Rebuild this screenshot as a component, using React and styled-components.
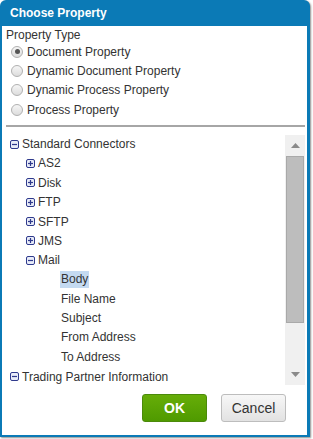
import styled, { createGlobalStyle } from "styled-components";

const GlobalStyle = createGlobalStyle`
    html, body {
        margin: 0;
        padding: 0;
        background: #ffffff;
    }
    body {
        font-family: "Liberation Sans", Arial, sans-serif;
        color: #333333;
    }
`;

const Page = styled.div`
    width: 313px;
    height: 439px;
    overflow: hidden;
    background: #ffffff;
`;

const Dialog = styled.div`
    width: 310px;
    height: 437px;
    box-sizing: border-box;
    display: flex;
    flex-direction: column;
    background: #0b7ab6;
    padding: 0 3px 2px 2px;
    border-top-left-radius: 6px;
    border-top-right-radius: 6px;
    box-shadow: 1px 1px 2px rgba(0, 0, 0, 0.45);
`;

const Header = styled.div`
    height: 26px;
    flex: none;
    display: flex;
    align-items: center;
    padding-left: 8px;
    padding-bottom: 1px;
    box-sizing: border-box;
    color: #ffffff;
    font-weight: bold;
    font-size: 12px;
`;

const Content = styled.div`
    flex: 1;
    background: #ffffff;
    display: flex;
    flex-direction: column;
    padding: 2px 2px 0 4px;
    font-size: 12px;
`;

const Label = styled.div`
    height: 14px;
    line-height: 14px;
`;

const RadioRow = styled.label`
    height: 19.33px;
    display: flex;
    align-items: center;
    gap: 4px;
    padding-left: 5px;
`;

const RadioDot = styled.span`
    width: 12px;
    height: 12px;
    box-sizing: border-box;
    border-radius: 50%;
    border: 1px solid #b0b0b0;
    background: linear-gradient(#f6f6f6, #dcdcdc);
    display: flex;
    align-items: center;
    justify-content: center;

    &::after {
        content: "";
        width: 5px;
        height: 5px;
        border-radius: 50%;
        background: ${p => (p.$checked ? "#555555" : "transparent")};
    }
`;

const Divider = styled.div`
    height: 2px;
    background: #a6a6a6;
    margin-top: 6px;
`;

const TreeArea = styled.div`
    margin-top: 6px;
    height: 252px;
    display: flex;
`;

const TreeList = styled.div`
    flex: 1;
    overflow: hidden;
    padding-top: 1px;
`;

const Row = styled.div`
    height: 19.4px;
    display: flex;
    align-items: center;
    gap: 3px;
    padding-left: ${p => p.$indent}px;
    white-space: nowrap;
`;

const Leaf = styled.span`
    padding: 1px 1px 2px 1px;
    background: ${p => (p.$selected ? "#c4daf1" : "transparent")};
`;

const Scrollbar = styled.div`
    width: 20px;
    margin-top: 2px;
    background: #f0f0f0;
    display: flex;
    flex-direction: column;
    align-items: center;
`;

const Arrow = styled.div`
    height: 21px;
    display: flex;
    align-items: center;
    justify-content: center;
`;

const Thumb = styled.div`
    width: 18px;
    height: 167px;
    box-sizing: border-box;
    background: #bdbdbd;
    border: 1px solid #a9a9a9;
`;

const Spacer = styled.div`
    flex: 1;
`;

const Footer = styled.div`
    display: flex;
    justify-content: flex-end;
    gap: 14px;
    margin-top: 9px;
    padding-right: 19px;
    padding-bottom: 13px;
`;

const Button = styled.button`
    width: 65px;
    height: 28px;
    box-sizing: border-box;
    border-radius: 3px;
    font-family: "Liberation Sans", Arial, sans-serif;
    font-size: 14px;
    padding: 0;
    cursor: pointer;
    border: 1px solid ${p => (p.$primary ? "#4b8a0a" : "#bdbdbd")};
    color: ${p => (p.$primary ? "#ffffff" : "#333333")};
    font-weight: ${p => (p.$primary ? "bold" : "normal")};
    background: ${p =>
        p.$primary
            ? "linear-gradient(#66ad08, #4f9a00)"
            : "linear-gradient(#f7f7f7, #e2e2e2)"};
`;

const ToggleBox = ({ open }) => (
    <svg width="9" height="9" viewBox="0 0 9 9">
        <rect x="0.5" y="0.5" width="8" height="8" rx="1.5" fill="#e8ecf8" stroke="#2f3a8c" />
        <path d="M2 4.5h5" stroke="#2f3a8c" strokeWidth="1.2" />
        {!open && <path d="M4.5 2v5" stroke="#2f3a8c" strokeWidth="1.2" />}
    </svg>
);

const Tri = ({ down }) => (
    <svg width="9" height="5" viewBox="0 0 9 5">
        <path d={down ? "M0 0h9L4.5 5z" : "M0 5h9L4.5 0z"} fill="#8a8a8a" />
    </svg>
);

const radios = [
    "Document Property",
    "Dynamic Document Property",
    "Dynamic Process Property",
    "Process Property",
];

const connectors = ["AS2", "Disk", "FTP", "SFTP", "JMS"];
const mailFields = ["Body", "File Name", "Subject", "From Address", "To Address"];

const App = () => {
    return (
        <Page>
            <GlobalStyle />
            <Dialog>
                <Header>Choose Property</Header>
                <Content>
                    <Label>Property Type</Label>
                    {radios.map((r, i) => (
                        <RadioRow key={r}>
                            <RadioDot $checked={i === 0} />
                            {r}
                        </RadioRow>
                    ))}
                    <Divider />
                    <TreeArea>
                        <TreeList>
                            <Row $indent={4}><ToggleBox open />Standard Connectors</Row>
                            {connectors.map(c => (
                                <Row key={c} $indent={20}><ToggleBox />{c}</Row>
                            ))}
                            <Row $indent={20}><ToggleBox open />Mail</Row>
                            {mailFields.map((f, i) => (
                                <Row key={f} $indent={54}>
                                    <Leaf $selected={i === 0}>{f}</Leaf>
                                </Row>
                            ))}
                            <Row $indent={4}><ToggleBox open />Trading Partner Information</Row>
                        </TreeList>
                        <Scrollbar>
                            <Arrow><Tri /></Arrow>
                            <Thumb />
                            <Spacer />
                            <Arrow><Tri down /></Arrow>
                        </Scrollbar>
                    </TreeArea>
                    <Footer>
                        <Button $primary>OK</Button>
                        <Button>Cancel</Button>
                    </Footer>
                </Content>
            </Dialog>
        </Page>
    );
};

export default App;
